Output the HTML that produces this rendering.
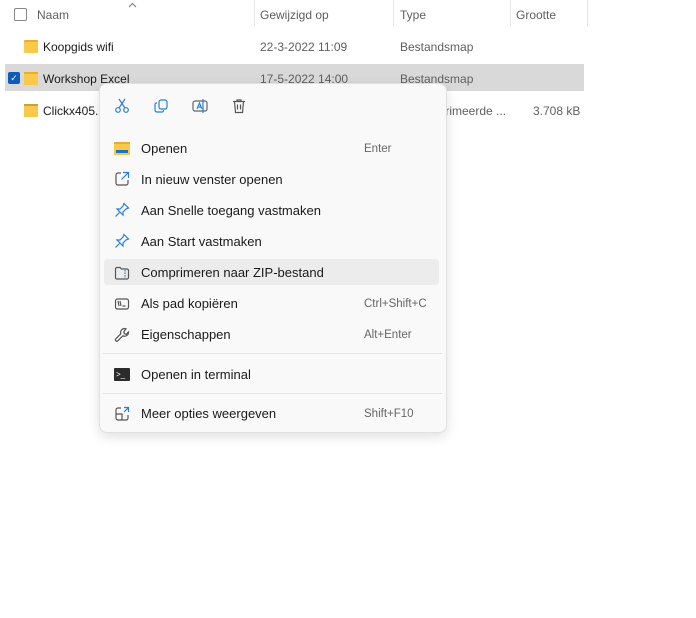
<!DOCTYPE html>
<html><head><style>
body{margin:0;width:696px;height:618px;background:#fff;font-family:"Liberation Sans",sans-serif;font-size:12px;color:#1a1a1a;position:relative;overflow:hidden}
.a{position:absolute;white-space:nowrap}
.g{color:#5f5f5f}
.sep{position:absolute;top:0;width:1px;height:26px;background:#e5e5e5}
.menu{position:absolute;left:99px;top:83px;width:346px;height:348px;background:#f9f9f9;border:1px solid #e0e0e0;border-radius:8px;box-shadow:0 4px 12px rgba(0,0,0,.12)}
.mi{position:absolute;left:41px;font-size:13px;color:#1a1a1a}
.sc{position:absolute;font-size:11.5px;color:#666}
.ic{position:absolute;left:14px}
</style></head><body>
<div class="a" style="left:14px;top:8px;width:11px;height:11px;border:1px solid #888;border-radius:2px"></div>
<div class="a g" style="left:37px;top:8px">Naam</div>
<svg class="a" style="left:128px;top:2px" width="9" height="6" viewBox="0 0 9 6" fill="none" stroke="#777" stroke-width="1"><path d="M1 5 4.5 1.5 8 5"/></svg>
<div class="sep" style="left:254px"></div><div class="sep" style="left:393px"></div><div class="sep" style="left:510px"></div><div class="sep" style="left:587px"></div>
<div class="a g" style="left:260px;top:8px">Gewijzigd op</div>
<div class="a g" style="left:400px;top:8px">Type</div>
<div class="a g" style="left:516px;top:8px">Grootte</div>

<div class="a" style="left:24px;top:40px;width:14px;height:11px;background:#f8c94a;border-radius:1px;border-top:2px solid #e9ad2a"></div>
<div class="a" style="left:43px;top:40px">Koopgids wifi</div>
<div class="a g" style="left:260px;top:40px">22-3-2022 11:09</div>
<div class="a g" style="left:400px;top:40px">Bestandsmap</div>

<div class="a" style="left:5px;top:64px;width:579px;height:27px;background:#d9d9d9"></div>
<div class="a" style="left:8px;top:72px;width:12px;height:12px;background:#0f5cb8;border-radius:2px;color:#fff;font-size:9px;text-align:center;line-height:12px">✓</div>
<div class="a" style="left:24px;top:72px;width:14px;height:11px;background:#f8c94a;border-top:2px solid #e9ad2a"></div>
<div class="a" style="left:43px;top:72px">Workshop Excel</div>
<div class="a g" style="left:260px;top:72px">17-5-2022 14:00</div>
<div class="a g" style="left:400px;top:72px">Bestandsmap</div>

<div class="a" style="left:24px;top:104px;width:14px;height:11px;background:#f8c94a;border-top:2px solid #c9a040"></div>
<div class="a" style="left:43px;top:104px">Clickx405.zip</div>
<div class="a g" style="left:400px;top:104px">Gecomprimeerde ...</div>
<div class="a g" style="left:533px;top:104px">3.708 kB</div>

<div class="menu">
<svg class="a" style="left:14px;top:14px" width="16" height="16" viewBox="0 0 16 16" fill="none" stroke="#2a7fd4" stroke-width="1.2"><circle cx="4" cy="12" r="2.3"/><circle cx="12" cy="12" r="2.3"/><path d="M5 10 11 1M11 10 5 1"/></svg>
<svg class="a" style="left:53px;top:14px" width="16" height="16" viewBox="0 0 16 16" fill="none" stroke="#2a7fd4" stroke-width="1.2"><rect x="6" y="2" width="8" height="9" rx="2"/><path d="M4 5H3.5A1.5 1.5 0 0 0 2 6.5V12a2 2 0 0 0 2 2h5a1.5 1.5 0 0 0 1.5-1.5V12"/></svg>
<svg class="a" style="left:92px;top:14px" width="16" height="16" viewBox="0 0 16 16" fill="none" stroke-width="1.2"><rect x="1" y="3" width="14" height="10" rx="2" stroke="#666"/><path d="M5 11 7.5 5 10 11M6 9h3" stroke="#2a7fd4"/><path d="M11 1v14" stroke="#2a7fd4"/></svg>
<svg class="a" style="left:131px;top:14px" width="16" height="16" viewBox="0 0 16 16" fill="none" stroke="#555" stroke-width="1.2"><path d="M2 3.5h12M6 3.5V2h4v1.5M3.5 3.5l1 11h7l1-11M6.5 6.5v5M9.5 6.5v5"/></svg>

<div class="ic" style="top:58px;width:16px;height:13px;background:#f8c94a;border-top:2px solid #e9ad2a;box-sizing:border-box"><div style="position:absolute;left:2px;bottom:2px;width:12px;height:3px;background:#1a73c9"></div></div>
<div class="mi" style="top:57px">Openen</div><div class="sc" style="left:264px;top:59px">Enter</div>

<svg class="ic" style="top:87px" width="16" height="16" viewBox="0 0 16 16" fill="none" stroke-width="1.2"><path d="M7 2H4a2 2 0 0 0-2 2v8a2 2 0 0 0 2 2h8a2 2 0 0 0 2-2V9" stroke="#555"/><path d="M9 1.5h5.5V7M14.5 1.5 7.5 8.5" stroke="#2a7fd4"/></svg>
<div class="mi" style="top:88px">In nieuw venster openen</div>

<svg class="ic" style="top:118px" width="16" height="16" viewBox="0 0 16 16" fill="none" stroke="#2a7fd4" stroke-width="1.2"><path d="M10 1.5 14.5 6 12 7 9 10 9 13 3 7 6 7 9 4ZM5.5 10.5 1.5 14.5"/></svg>
<div class="mi" style="top:119px">Aan Snelle toegang vastmaken</div>

<svg class="ic" style="top:149px" width="16" height="16" viewBox="0 0 16 16" fill="none" stroke="#2a7fd4" stroke-width="1.2"><path d="M10 1.5 14.5 6 12 7 9 10 9 13 3 7 6 7 9 4ZM5.5 10.5 1.5 14.5"/></svg>
<div class="mi" style="top:150px">Aan Start vastmaken</div>

<div class="a" style="left:4px;top:175px;width:335px;height:26px;background:#ececec;border-radius:4px"></div>
<svg class="ic" style="top:181px" width="16" height="16" viewBox="0 0 16 16" fill="none" stroke-width="1.2"><path d="M1.5 4V12.5A1.5 1.5 0 0 0 3 14h10a1.5 1.5 0 0 0 1.5-1.5V5.5A1.5 1.5 0 0 0 13 4H7.5L6 2.5H3A1.5 1.5 0 0 0 1.5 4Z" stroke="#555"/><path d="M11 5v8" stroke="#2a7fd4" stroke-dasharray="1.5 1"/></svg>
<div class="mi" style="top:181px">Comprimeren naar ZIP-bestand</div>

<svg class="ic" style="top:212px" width="16" height="16" viewBox="0 0 16 16" fill="none" stroke="#555" stroke-width="1.2"><rect x="1.5" y="3" width="13" height="10" rx="2"/><path d="M4 5l1 5M6 5l1 5M8.5 10h3"/></svg>
<div class="mi" style="top:212px">Als pad kopiëren</div><div class="sc" style="left:264px;top:214px">Ctrl+Shift+C</div>

<svg class="ic" style="top:243px" width="16" height="16" viewBox="0 0 16 16" fill="none" stroke="#555" stroke-width="1.2"><path d="M10.5 1.5a4 4 0 0 0-3.7 5.3L1.8 11.8a1.4 1.4 0 0 0 2 2l5-5A4 4 0 0 0 14.5 5l-2.2 2.2-2-.5-.5-2L12 1.8a4 4 0 0 0-1.5-.3Z"/></svg>
<div class="mi" style="top:243px">Eigenschappen</div><div class="sc" style="left:264px;top:245px">Alt+Enter</div>

<div class="a" style="left:3px;top:269px;width:339px;height:1px;background:#e3e3e3"></div>
<div class="ic" style="top:284px;width:16px;height:13px;background:#2b2b2b;border-radius:1px;color:#fff;font-size:8px;line-height:13px;padding-left:2px;box-sizing:border-box">&gt;_</div>
<div class="mi" style="top:283px">Openen in terminal</div>
<div class="a" style="left:3px;top:309px;width:339px;height:1px;background:#e3e3e3"></div>

<svg class="ic" style="top:322px" width="16" height="16" viewBox="0 0 16 16" fill="none" stroke-width="1.2"><path d="M7 2H4a2 2 0 0 0-2 2v8a2 2 0 0 0 2 2h8a2 2 0 0 0 2-2V9M2 8h6v6" stroke="#555"/><path d="M10 1.5h4.5V6M14.5 1.5 10 6" stroke="#2a7fd4"/></svg>
<div class="mi" style="top:322px">Meer opties weergeven</div><div class="sc" style="left:264px;top:324px">Shift+F10</div>
</div>
</body></html>
